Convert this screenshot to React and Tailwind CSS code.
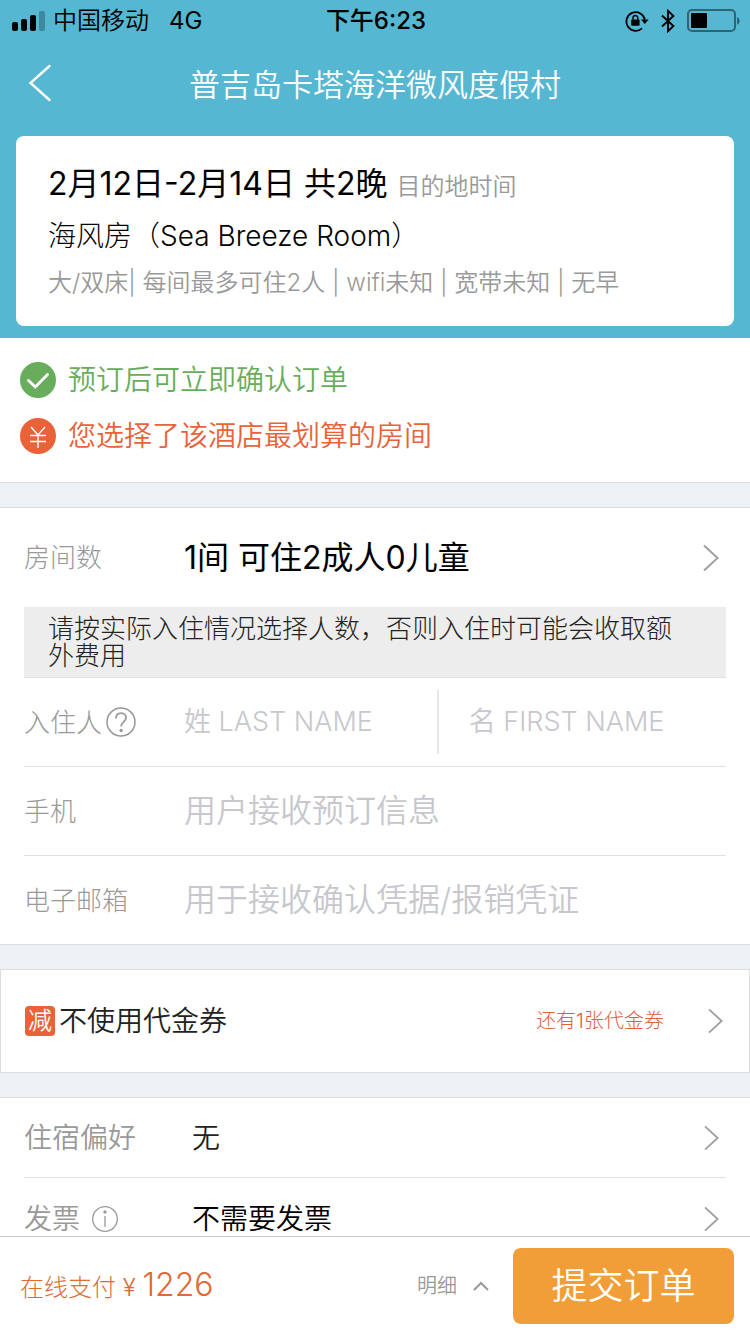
import React, { useState } from "react";

function Chevron({ className = "h-[26px] w-[15px]" }) {
  return (
    <svg viewBox="0 0 16 28" fill="none" stroke="#a0a0a0" strokeWidth="2" className={`shrink-0 ${className}`}>
      <path d="M1 1.5 14.6 14 1 26.5" />
    </svg>
  );
}

function StatusBar() {
  return (
    <div className="grid h-10 grid-cols-3 items-center pt-0.5 pr-2.5 pl-3 text-2xl leading-8 text-black">
      <div className="flex items-center gap-2 whitespace-nowrap">
        <svg viewBox="0 0 33 20" className="h-5 w-[33px]">
          <rect x="0" y="11" width="6" height="9" rx="2" />
          <rect x="9" y="8" width="6" height="12" rx="2" />
          <rect x="18" y="4" width="6" height="16" rx="2" />
          <rect x="27" y="0" width="6" height="20" rx="2" opacity="0.25" />
        </svg>
        <span className="font-[350]">中国移动</span>
        <span className="ml-3">4G</span>
      </div>
      <div className="text-center font-medium whitespace-nowrap">下午6:23</div>
      <div className="flex items-center justify-end gap-3">
        <svg viewBox="0 0 24 22" className="h-[22px] w-6">
          <path d="M17 18.4A9.3 9.3 0 1 1 19.8 9.5" fill="none" stroke="#000" strokeWidth="1.8" />
          <path d="M16 9.6h7.6L19.8 14z" />
          <rect x="6.2" y="9.4" width="8.4" height="6.4" rx="1" />
          <path d="M8 9.8V7.9a2.4 2.4 0 0 1 4.8 0v1.9" fill="none" stroke="#000" strokeWidth="1.4" />
        </svg>
        <svg viewBox="0 0 14 24" fill="none" stroke="#000" strokeWidth="1.9" className="h-6 w-3.5">
          <path d="M1 6.5 12.4 17 7 22.2V1.8L12.4 7 1 17.5" />
        </svg>
        <svg viewBox="0 0 53 24" className="h-6 w-[53px]">
          <rect x="1" y="1" width="47" height="21" rx="4" fill="none" stroke="#000" strokeWidth="2" opacity="0.45" />
          <rect x="4" y="4" width="16" height="15" rx="1" />
          <path d="M50.2 8a4.5 4.5 0 0 1 0 8z" opacity="0.5" />
        </svg>
      </div>
    </div>
  );
}

function Header() {
  return (
    <header className="bg-[#55b7d1] px-4 pb-3">
      <div className="-mx-4">
        <StatusBar />
      </div>
      <div className="grid h-24 grid-cols-[40px_1fr_40px] items-center pb-1.5">
        <button aria-label="返回" className="pb-1 pl-3">
          <svg viewBox="0 0 24 38" fill="none" stroke="#fff" strokeWidth="2.4" strokeLinecap="round" className="h-[38px] w-6">
            <path d="M21.5 2 2.5 19l19 17" />
          </svg>
        </button>
        <h1 className="text-center text-[31px] leading-10 font-[350] text-white">普吉岛卡塔海洋微风度假村</h1>
      </div>
      <div className="rounded-lg bg-white px-8 pt-6 pb-6">
        <p className="text-[32px] leading-[48px] text-black">
          2月12日-2月14日 共2晚 <span className="text-2xl font-[350] text-[#999]">目的地时间</span>
        </p>
        <p className="text-[28px] leading-[56px] font-light text-black">海风房（Sea Breeze Room）</p>
        <p className="text-2xl leading-[38px] font-[350] text-[#999]">
          大/双床| 每间最多可住2人 | wifi未知 | 宽带未知 | 无早
        </p>
      </div>
    </header>
  );
}

function Notices() {
  return (
    <section className="space-y-5 border-b border-[#dcdddf] bg-white px-5 pt-6 pb-7 text-[28px] leading-9 font-[350]">
      <p className="flex items-center gap-3 text-[#67ad5c]">
        <svg viewBox="0 0 36 36" className="size-9">
          <circle cx="18" cy="18" r="18" fill="#67ad5c" />
          <path d="m8.500 18.500 6.800 6.500 12.200-12.500" fill="none" stroke="#fff" strokeWidth="2.8" strokeLinecap="round" />
        </svg>
        预订后可立即确认订单
      </p>
      <p className="flex items-center gap-3 text-[#e9633a]">
        <svg viewBox="0 0 36 36" className="size-9">
          <circle cx="18" cy="18" r="18" fill="#ea6237" />
          <path d="m11 9 7 8 7-8M18 17v13M10 17.500h16M10 23.500h16" fill="none" stroke="#fff" strokeWidth="1.4" />
        </svg>
        您选择了该酒店最划算的房间
      </p>
    </section>
  );
}

const labelClass = "flex w-40 shrink-0 items-center gap-1 text-[26px] font-light text-[#999]";
const inputClass = "min-w-0 bg-transparent font-[350] outline-none placeholder:text-[#c7c7cd]";

function GuestForm() {
  const [form, setForm] = useState({ last: "", first: "", phone: "", email: "" });
  const update = (e) => setForm({ ...form, [e.target.name]: e.target.value });

  return (
    <section className="border-y border-[#dcdddf] bg-white px-6">
      <button className="flex h-[99px] w-full items-center pr-[7px] text-left">
        <span className={labelClass}>房间数</span>
        <span className="flex-1 text-[32px] text-black">1间 可住2成人0儿童</span>
        <Chevron className="h-7 w-4" />
      </button>
      <p className="border-b border-[#e0e0e0] bg-[#ededed] py-2 pr-10 pl-6 text-[26px] leading-[27px] font-light text-[#222]">
        请按实际入住情况选择人数，否则入住时可能会收取额外费用
      </p>
      <div className="flex h-[89px] items-center border-b border-[#e0e1e3] text-[27px]">
        <label htmlFor="last" className={labelClass}>
          入住人
          <svg viewBox="0 0 30 30" fill="none" stroke="#999" strokeWidth="1.5" className="size-[30px]">
            <circle cx="15" cy="15" r="14" />
            <path d="M10 11.5c0-3.4 2.2-5.3 5.1-5.3s5 1.9 5 4.6c0 4-5 4.2-5 8.7" strokeWidth="1.8" />
            <circle cx="15.1" cy="23.5" r="1" fill="#999" />
          </svg>
        </label>
        <input id="last" name="last" value={form.last} onChange={update} placeholder="姓 LAST NAME" className={`w-[36%] ${inputClass}`} />
        <span className="h-16 w-0.5 bg-[#e6e7e9]" />
        <input name="first" aria-label="名" value={form.first} onChange={update} placeholder="名 FIRST NAME" className={`flex-1 pl-[30px] ${inputClass}`} />
      </div>
      <div className="flex h-[89px] items-center border-b border-[#e0e1e3]">
        <label htmlFor="phone" className={labelClass}>手机</label>
        <input id="phone" name="phone" value={form.phone} onChange={update} placeholder="用户接收预订信息" className={`flex-1 text-[32px] ${inputClass}`} />
      </div>
      <div className="flex h-[88px] items-center">
        <label htmlFor="email" className={labelClass}>电子邮箱</label>
        <input id="email" name="email" value={form.email} onChange={update} placeholder="用于接收确认凭据/报销凭证" className={`flex-1 text-[32px] ${inputClass}`} />
      </div>
    </section>
  );
}

function Voucher() {
  return (
    <button className="flex h-[104px] w-full shrink-0 items-center border border-[#dcdddf] bg-white pr-[26px] pl-6 text-left">
      <span className="size-[30px] rounded bg-[#ea6237] text-center text-2xl leading-[30px] font-[350] text-white">减</span>
      <span className="flex-1 pl-1 text-[28px] font-[350] text-[#222]">不使用代金券</span>
      <span className="pr-11 text-xl font-light text-[#e0603a]">还有1张代金券</span>
      <Chevron />
    </button>
  );
}

function Preferences() {
  return (
    <section className="border-t border-[#dcdddf] bg-white px-6 text-[28px] font-[350]">
      <button className="flex h-20 w-full items-center border-b border-[#e0e1e3] pr-[7px] text-left">
        <span className="w-[168px] text-[#999]">住宿偏好</span>
        <span className="flex-1 text-[#222]">无</span>
        <Chevron />
      </button>
      <button className="flex h-[82px] w-full items-center pr-[7px] text-left">
        <span className="flex w-[168px] items-center gap-3 text-[#999]">
          发票
          <svg viewBox="0 0 26 26" fill="none" stroke="#999" strokeWidth="1.3" className="size-[26px]">
            <circle cx="13" cy="13" r="12.3" />
            <path d="M13 10v11" />
            <circle cx="13" cy="6" r="1" fill="#999" />
          </svg>
        </span>
        <span className="flex-1 text-black">不需要发票</span>
        <Chevron />
      </button>
    </section>
  );
}

function BottomBar() {
  return (
    <footer className="flex h-[98px] shrink-0 items-center border-t border-[#ccc] bg-white pr-4 pl-5">
      <p className="flex-1 text-2xl font-light text-[#e06a35]">
        在线支付 ¥ <span className="text-[32px]">1226</span>
      </p>
      <button className="mr-6 flex items-center gap-4 text-xl font-[350] text-[#999]">
        明细
        <svg viewBox="0 0 16 10" fill="none" stroke="#999" strokeWidth="2" className="h-2.5 w-4">
          <path d="m1 9 7-7 7 7" />
        </svg>
      </button>
      <button className="h-[76px] w-[221px] rounded-lg bg-[#f29e38] text-4xl font-[350] text-white">提交订单</button>
    </footer>
  );
}

export default function App() {
  return (
    <div lang="zh-CN" className="flex h-screen flex-col bg-[#edf1f5] font-['Inter','Noto_Sans_CJK_SC',sans-serif]">
      <main className="flex min-h-0 flex-1 flex-col overflow-y-auto [scrollbar-width:none]">
        <Header />
        <Notices />
        <div className="mt-6 flex flex-col gap-6">
          <GuestForm />
          <Voucher />
          <Preferences />
        </div>
      </main>
      <BottomBar />
    </div>
  );
}
